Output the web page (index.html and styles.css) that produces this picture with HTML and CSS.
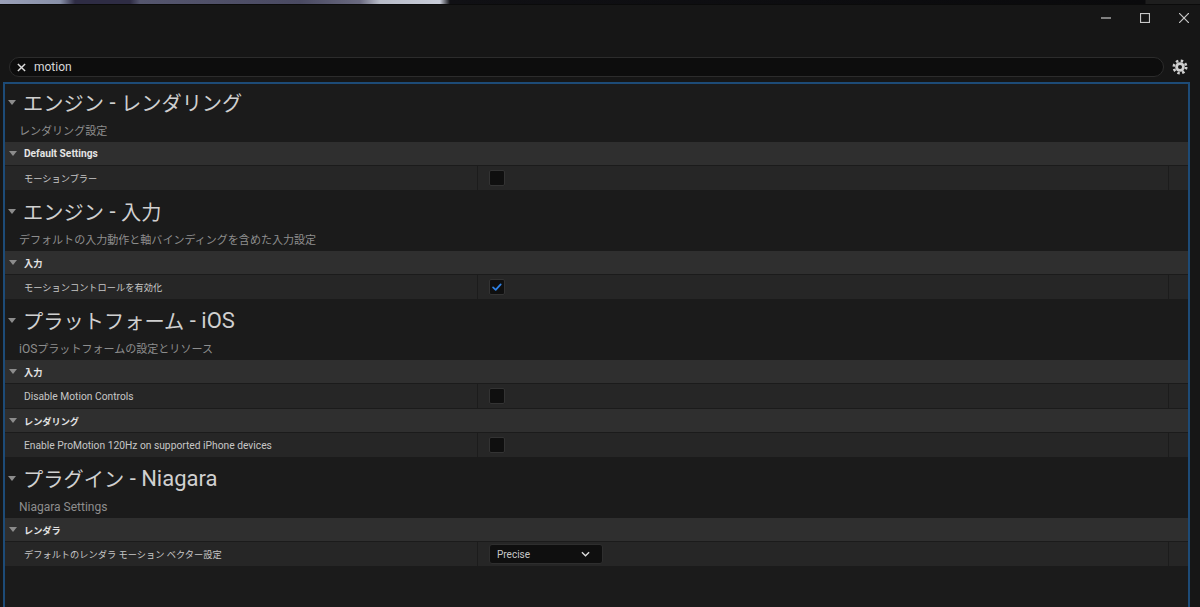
FILE: index.html
```html
<!DOCTYPE html>
<html lang="ja">
<head>
<meta charset="utf-8">
<title>Project Settings</title>
<link rel="stylesheet" href="styles.css">
</head>
<body>
<div class="app">
  <div class="desktop"></div>
  <div class="titlebar">
    <svg class="wc" viewBox="0 0 10 10"><line x1="0" y1="5" x2="10" y2="5"/></svg>
    <svg class="wc" viewBox="0 0 10 10"><rect x="0.5" y="0.5" width="9" height="9"/></svg>
    <svg class="wc" viewBox="0 0 10 10"><line x1="0" y1="0" x2="10" y2="10"/><line x1="10" y1="0" x2="0" y2="10"/></svg>
  </div>

  <div class="searchrow">
    <div class="search">
      <svg class="clear" viewBox="0 0 10 10"><line x1="1" y1="1" x2="9" y2="9"/><line x1="9" y1="1" x2="1" y2="9"/></svg>
      <span class="query">motion</span>
    </div>
    <svg class="gear" viewBox="0 0 16 16">
      <circle class="teeth" cx="8" cy="8" r="6.2"/>
      <circle class="body" cx="8" cy="8" r="4.8"/>
      <circle class="hole" cx="8" cy="8" r="2"/>
    </svg>
  </div>

  <div class="panel">
    <section class="sec first">
      <div class="sec-title"><span class="tri big"></span><span class="ja">エンジン</span> - <span class="ja">レンダリング</span></div>
      <div class="sec-sub"><span class="ja">レンダリング設定</span></div>
      <div class="cat"><span class="tri"></span>Default Settings</div>
      <div class="row">
        <div class="name"><span class="ja">モーションブラー</span></div>
        <div class="value"><span class="cb"></span></div>
        <div class="tail"></div>
      </div>
    </section>

    <section class="sec">
      <div class="sec-title"><span class="tri big"></span><span class="ja">エンジン</span> - <span class="ja">入力</span></div>
      <div class="sec-sub"><span class="ja">デフォルトの入力動作と軸バインディングを含めた入力設定</span></div>
      <div class="cat"><span class="tri"></span><span class="ja">入力</span></div>
      <div class="row">
        <div class="name"><span class="ja">モーションコントロールを有効化</span></div>
        <div class="value"><span class="cb on"><svg viewBox="0 0 16 16"><polyline points="3.5,8.5 6.5,11.2 12.2,5"/></svg></span></div>
        <div class="tail"></div>
      </div>
    </section>

    <section class="sec">
      <div class="sec-title"><span class="tri big"></span><span class="ja">プラットフォーム</span> - iOS</div>
      <div class="sec-sub">iOS<span class="ja">プラットフォームの設定とリソース</span></div>
      <div class="cat"><span class="tri"></span><span class="ja">入力</span></div>
      <div class="row">
        <div class="name">Disable Motion Controls</div>
        <div class="value"><span class="cb"></span></div>
        <div class="tail"></div>
      </div>
      <div class="cat"><span class="tri"></span><span class="ja">レンダリング</span></div>
      <div class="row">
        <div class="name">Enable ProMotion 120Hz on supported iPhone devices</div>
        <div class="value"><span class="cb"></span></div>
        <div class="tail"></div>
      </div>
    </section>

    <section class="sec">
      <div class="sec-title"><span class="tri big"></span><span class="ja">プラグイン</span> - Niagara</div>
      <div class="sec-sub">Niagara Settings</div>
      <div class="cat"><span class="tri"></span><span class="ja">レンダラ</span></div>
      <div class="row">
        <div class="name"><span class="ja">デフォルトのレンダラ モーション ベクター設定</span></div>
        <div class="value">
          <div class="combo">
            <span>Precise</span>
            <svg class="chev" viewBox="0 0 10 6"><polyline points="1,1 5,5 9,1"/></svg>
          </div>
        </div>
        <div class="tail"></div>
      </div>
    </section>
  </div>
</div>
</body>
</html>
```

FILE: styles.css
```css
html, body {
  margin: 0;
  padding: 0;
  height: 100%;
}

body {
  background: #161616;
  font-family: Roboto, "Noto Sans CJK JP", sans-serif;
  color: #c4c4c4;
  overflow: hidden;
}

.app {
  display: flex;
  flex-direction: column;
  height: 100vh;
}

.ja {
  font-size: 0.92em;
}

.row .ja,
.cat .ja {
  font-size: 0.9em;
}

/* desktop strip behind the window */
.desktop {
  height: 4px;
  flex: none;
  background: linear-gradient(to right,
    #9aa0b8 0, #8890a8 60px, #2e2c44 75px, #2e2c44 130px,
    #55566e 140px, #4a4a62 300px, #6a6a80 360px, #b8bcc8 380px,
    #c8ccd8 440px, #101014 450px, #0a0a0c 1145px, #1e1e1e 1146px, #1e1e1e 100%);
  border-bottom: 1px solid #0b0b0b;
}

.titlebar {
  height: 26px;
  flex: none;
  display: flex;
  justify-content: flex-end;
  align-items: center;
  gap: 29px;
  padding-right: 11px;
}

.wc {
  width: 10px;
  height: 10px;
  fill: none;
  stroke: #c8c8c8;
  stroke-width: 1.2;
}

.searchrow {
  flex: none;
  display: flex;
  align-items: center;
  margin-top: 26px;
  padding: 0 12px 0 9px;
  gap: 8px;
}

.search {
  flex: 1;
  height: 18px;
  border: 1px solid #2c2c2c;
  border-radius: 10px;
  background: #0d0d0d;
  display: flex;
  align-items: center;
  padding-left: 7px;
  gap: 8px;
}

.clear {
  width: 9px;
  height: 9px;
  stroke: #dcdcdc;
  stroke-width: 1.6;
}

.query {
  font-size: 12px;
  color: #d8d8d8;
}

.gear {
  width: 16px;
  height: 16px;
}

.gear .teeth {
  fill: none;
  stroke: #cfcfcf;
  stroke-width: 2.6;
  stroke-dasharray: 2.43 2.44;
}

.gear .body {
  fill: #cfcfcf;
}

.gear .hole {
  fill: #161616;
}

.panel {
  flex: 1;
  margin: 5px 10px 0 3px;
  border: 2px solid #1d4b77;
  border-bottom: none;
  background: #1b1b1b;
}

.sec {
  padding-top: 2px;
}

.sec.first {
  padding-top: 0;
}

.sec-title {
  height: 36px;
  display: flex;
  align-items: center;
  font-size: 22px;
  color: #d0d0d0;
  white-space: pre;
}

.tri {
  display: inline-block;
  width: 0;
  height: 0;
  border-left: 4px solid transparent;
  border-right: 4px solid transparent;
  border-top: 5px solid #8c8c8c;
  margin-left: 4px;
  margin-right: 7px;
}

.tri.big {
  margin-left: 3px;
  margin-right: 7px;
}

.sec-sub {
  height: 22px;
  line-height: 22px;
  font-size: 12px;
  color: #8e8e8e;
  padding-left: 14px;
}

.cat {
  height: 23px;
  margin-bottom: 1px;
  background: #2f2f2f;
  display: flex;
  align-items: center;
  font-size: 10.2px;
  font-weight: 700;
  color: #e4e4e4;
}

.row {
  height: 24px;
  margin-bottom: 1px;
  background: #262626;
  display: flex;
  font-size: 10.25px;
  color: #c6c6c6;
}

.name {
  width: 453px;
  padding-left: 19px;
  display: flex;
  align-items: center;
  border-right: 1px solid #1c1c1c;
}

.value {
  flex: 1;
  display: flex;
  align-items: center;
  padding-left: 11px;
  border-right: 1px solid #1c1c1c;
}

.tail {
  width: 19px;
}

.cb {
  width: 14px;
  height: 14px;
  border: 1px solid #333333;
  border-radius: 2px;
  background: #0f0f0f;
  display: flex;
}

.cb svg {
  width: 14px;
  height: 14px;
  fill: none;
  stroke: #2f82e6;
  stroke-width: 2;
  stroke-linecap: round;
  stroke-linejoin: round;
}

.combo {
  width: 93px;
  height: 18px;
  border: 1px solid #2e2e2e;
  border-radius: 3px;
  background: #0f0f0f;
  display: flex;
  align-items: center;
  justify-content: space-between;
  padding: 0 12px 0 7px;
  color: #c8c8c8;
  font-size: 10px;
}

.chev {
  width: 9px;
  height: 6px;
  fill: none;
  stroke: #dedede;
  stroke-width: 1.5;
}
```
